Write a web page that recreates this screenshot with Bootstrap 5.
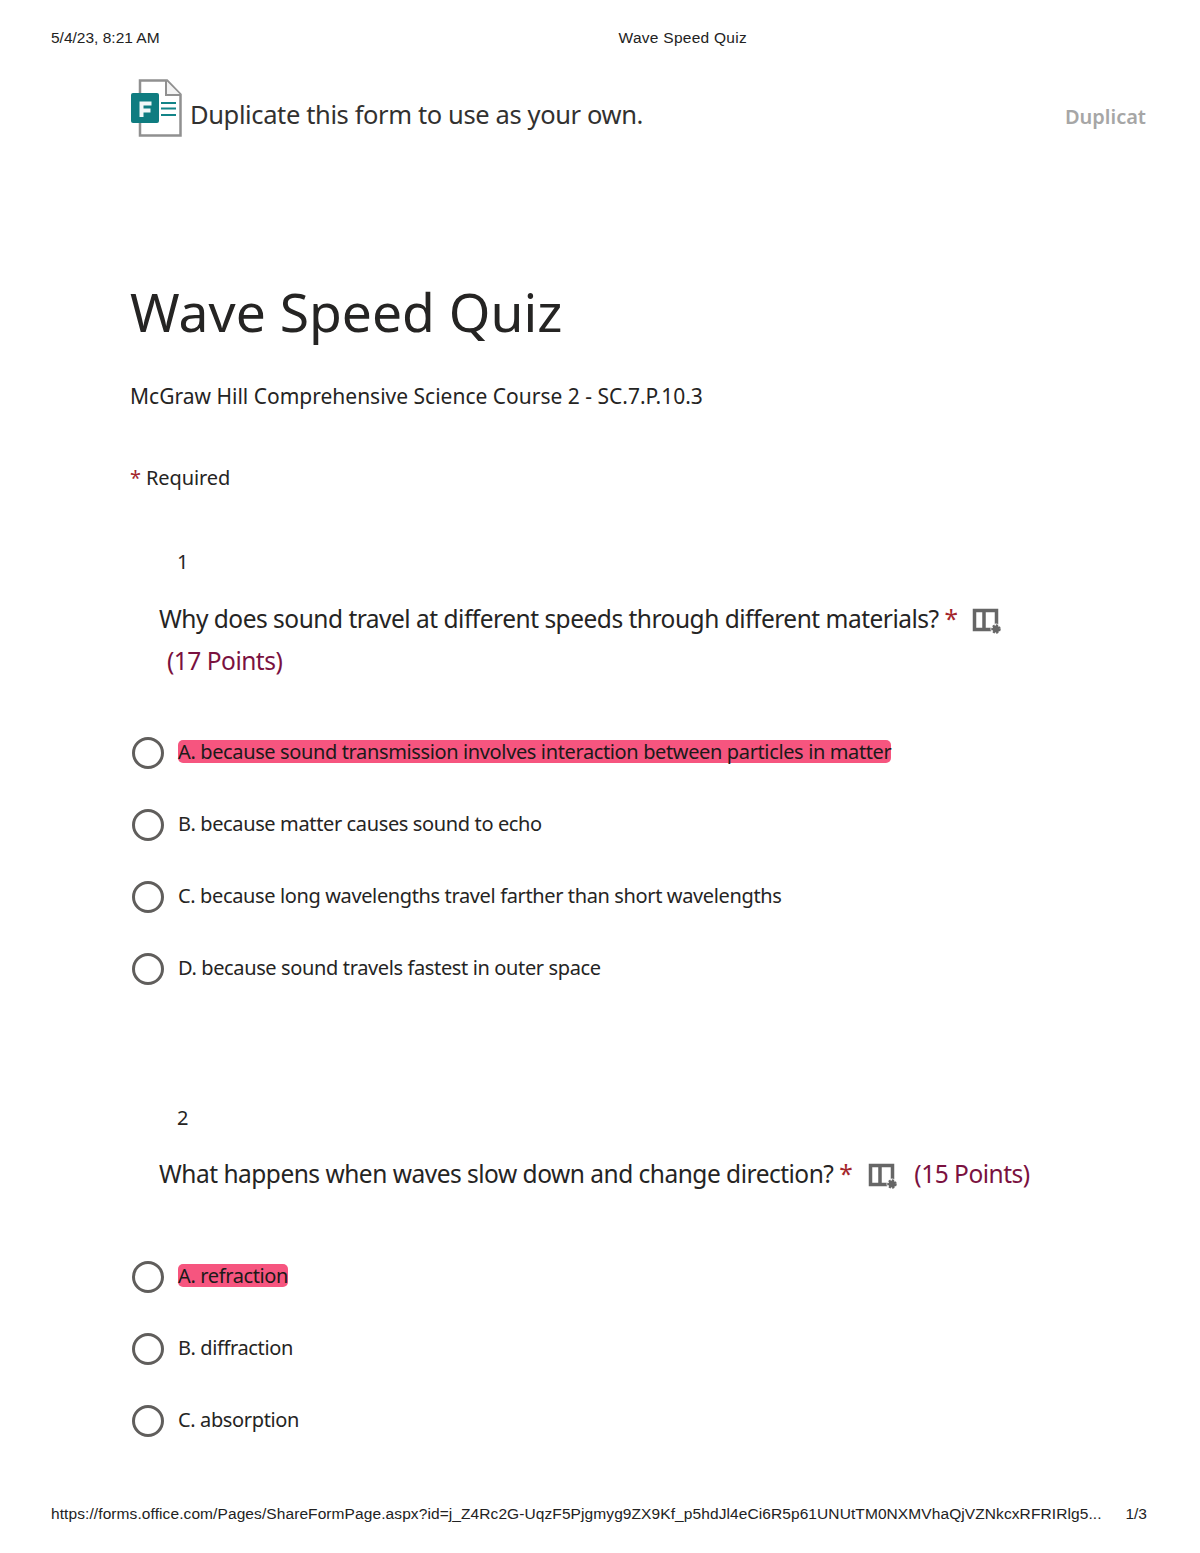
<!doctype html>
<html lang="en"><head><meta charset="utf-8"><title>Wave Speed Quiz</title>
<link href="https://cdn.jsdelivr.net/npm/bootstrap@5.3.0/dist/css/bootstrap.min.css" rel="stylesheet">
<style>
html,body{height:100%}
body{font-family:"Noto Sans","Open Sans",sans-serif;color:#252423;background:#fff}
.sheet{height:1553px;overflow:hidden}
.printline{font-family:"Liberation Sans",Arial,sans-serif;font-size:15.5px;color:#222;padding:0 53px 0 51px;line-height:18px;white-space:nowrap}
.printtop{padding-top:29px}
.printtitle{margin-left:459px;letter-spacing:.27px}
.printfoot{margin-bottom:30px}
.urltext{letter-spacing:.09px}
.quizbody{padding:0 53px 0 130px}
.banner{margin-top:32px;height:58px}
.bannertext{font-size:25.5px;letter-spacing:-.38px;margin-left:8px;line-height:36px;color:#323130;padding-top:12px;box-sizing:content-box}
.dupbtn{font-size:20px;font-weight:600;color:#a6a6a6;white-space:nowrap;padding-top:17px;margin-right:1px}
.quiztitle{font-size:53.4px;font-weight:400;line-height:70px;margin:140px 0 0;color:#252423}
.subtitle{font-size:21px;line-height:30px;margin-top:34px}
.reqline{font-size:20px;letter-spacing:-.1px;line-height:30px;margin-top:52px}
.star{color:#a4262c}
.qnum{font-size:20px;line-height:30px;margin-left:47px}
.q1{margin-top:54px}
.q2{margin-top:99px}
.qtext{font-size:24.5px;letter-spacing:-.5px;line-height:42px;margin:20px 0 0 29px}
.q1 + .qtext{margin-top:21px}
.pts{color:#7a1140}
.ptsline{margin-left:8px}
.bookicon{width:30px;height:28px;vertical-align:-7px;margin:0 16px 0 14px}
.q2 + .qtext .bookicon{margin-left:16px}
.optlist{margin-top:34px}
.optlist.two{margin-top:45px}
.optrow{height:72px}
.radiodot{width:32px;height:32px;border:3px solid #605e5c;border-radius:50%;margin:1px 14px 0 2px;flex:none}
.opttext{font-size:20px;letter-spacing:-.37px;line-height:23px;margin-top:-1px}
.hilite{background:#f6557f;border-radius:5px;color:#1b1a19}
</style></head><body>
<div class="sheet d-flex flex-column">
  <div class="printline printtop d-flex"><span>5/4/23, 8:21 AM</span><span class="printtitle">Wave Speed Quiz</span></div>
  <main class="quizbody flex-grow-1">
    <div class="banner d-flex align-items-center justify-content-between">
      <div class="d-flex align-items-center">
        <svg width="52" height="58" viewBox="0 0 52 58" aria-hidden="true"><path d="M10 1.500h27l13.500 14v41H10z" fill="#fff" stroke="#909090" stroke-width="2.500"/><path d="M36 1.500v14.500h14.500" fill="#f3f3f3" stroke="#909090" stroke-width="2"/><rect x="1" y="14" width="28" height="30" rx="2" fill="#0f7c80"/><path d="M9.500 22.500h12v4h-8v3h7v4h-7v4.500h-4z" fill="#f2f8f8"/><path d="M31 24h15M31 29.500h15M31 36h15" stroke="#128488" stroke-width="2" fill="none"/></svg>
        <span class="bannertext">Duplicate this form to use as your own.</span>
      </div>
      <div class="dupbtn">Duplicat</div>
    </div>
    <h1 class="quiztitle">Wave Speed Quiz</h1>
    <div class="subtitle">McGraw Hill Comprehensive Science Course 2 - SC.7.P.10.3</div>
    <div class="reqline"><span class="star">*</span> Required</div>

    <div class="qnum q1">1</div>
    <div class="qtext">Why does sound travel at different speeds through different materials? <span class="star">*</span><svg class="bookicon" viewBox="0 0 30 28" aria-hidden="true"><path d="M2.500 3.500h22v19h-22zM12 3.500v19" fill="none" stroke="#666" stroke-width="3.500"/><circle cx="24" cy="22" r="5.500" fill="#fff"/><circle cx="24" cy="22" r="3.500" fill="#666" stroke="#666" stroke-width="2.500" stroke-dasharray="2 1.200"/></svg><br><span class="pts ptsline">(17 Points)</span></div>
    <div class="optlist">
      <div class="optrow d-flex align-items-center"><span class="radiodot"></span><span class="opttext hilite">A. because sound transmission involves interaction between particles in matter</span></div>
      <div class="optrow d-flex align-items-center"><span class="radiodot"></span><span class="opttext">B. because matter causes sound to echo</span></div>
      <div class="optrow d-flex align-items-center"><span class="radiodot"></span><span class="opttext">C. because long wavelengths travel farther than short wavelengths</span></div>
      <div class="optrow d-flex align-items-center"><span class="radiodot"></span><span class="opttext">D. because sound travels fastest in outer space</span></div>
    </div>

    <div class="qnum q2">2</div>
    <div class="qtext">What happens when waves slow down and change direction? <span class="star">*</span><svg class="bookicon" viewBox="0 0 30 28" aria-hidden="true"><path d="M2.500 3.500h22v19h-22zM12 3.500v19" fill="none" stroke="#666" stroke-width="3.500"/><circle cx="24" cy="22" r="5.500" fill="#fff"/><circle cx="24" cy="22" r="3.500" fill="#666" stroke="#666" stroke-width="2.500" stroke-dasharray="2 1.200"/></svg><span class="pts">(15 Points)</span></div>
    <div class="optlist two">
      <div class="optrow d-flex align-items-center"><span class="radiodot"></span><span class="opttext hilite">A. refraction</span></div>
      <div class="optrow d-flex align-items-center"><span class="radiodot"></span><span class="opttext">B. diffraction</span></div>
      <div class="optrow d-flex align-items-center"><span class="radiodot"></span><span class="opttext">C. absorption</span></div>
    </div>
  </main>
  <div class="printline printfoot d-flex justify-content-between"><span class="urltext">https://forms.office.com/Pages/ShareFormPage.aspx?id=j_Z4Rc2G-UqzF5Pjgmyg9ZX9Kf_p5hdJl4eCi6R5p61UNUtTM0NXMVhaQjVZNkcxRFRIRlg5...</span><span>1/3</span></div>
</div>
<script src="https://cdn.jsdelivr.net/npm/bootstrap@5.3.0/dist/js/bootstrap.bundle.min.js"></script>
</body></html>
